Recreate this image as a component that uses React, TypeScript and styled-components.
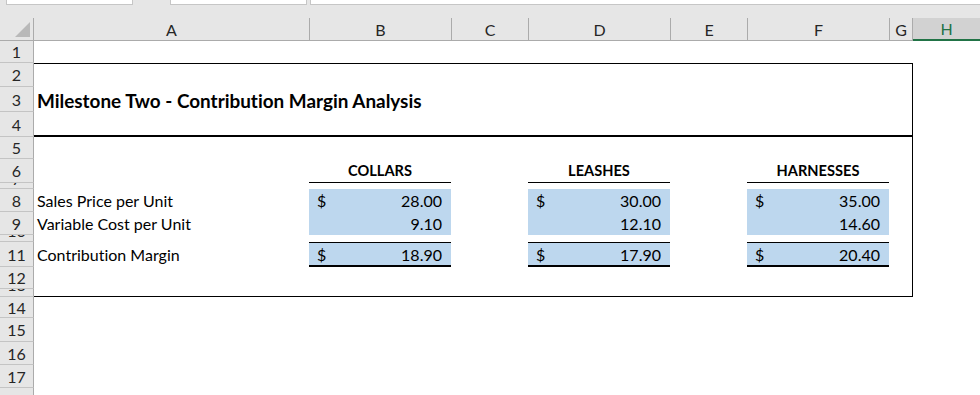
import React from 'react';
import styled, { createGlobalStyle, css } from 'styled-components';

const FONT = `Lato, "Liberation Sans", "DejaVu Sans", sans-serif`;

const GlobalStyle = createGlobalStyle`
  html, body { margin: 0; padding: 0; background: #ffffff; }
  body { font-family: ${FONT}; overflow: hidden; font-variant-ligatures: none; }
  #root { width: 980px; height: 395px; overflow: hidden; }
`;

const Window = styled.div`
  width: 980px;
  height: 395px;
  overflow: hidden;
  display: flex;
  flex-direction: column;
  background: #ffffff;
`;

const TopBar = styled.div`
  flex: none;
  height: 18px;
  background: #e6e6e6;
  display: flex;
  align-items: flex-start;
`;

const FieldBox = styled.div<{ $w?: number; $ml: number }>`
  height: 5px;
  box-sizing: border-box;
  background: #ffffff;
  border: 1px solid #c6c6c6;
  border-top: none;
  margin-left: ${(p) => p.$ml}px;
  ${(p) =>
    p.$w
      ? css`
          width: ${p.$w}px;
          flex: none;
        `
      : css`
          flex: 1;
          margin-right: -2px;
        `}
`;

const Sheet = styled.div`
  flex: 1;
  display: grid;
  grid-template-columns: 34px 275px 142px 77px 142px 77px 142px 24px 1fr;
  grid-template-rows: 23px 22px 24px 25px 25px 22px 24px 6px 23px 23px 7px 25px 22px 8px 21px 24px 23px 23px 23px;
  font-family: ${FONT};
  font-size: 16px;
  font-variant-ligatures: none;
  color: #000000;
  background: #ffffff;
`;

const Corner = styled.div`
  grid-column: 1;
  grid-row: 1;
  background: #e6e6e6;
  border-right: 1px solid #ababab;
  border-bottom: 1px solid #ababab;
  display: flex;
  align-items: flex-end;
  justify-content: flex-end;
  padding: 0 3px 3px 0;
  svg {
    display: block;
  }
`;

const ColHeader = styled.div<{ $col: number; $selected?: boolean; $left?: boolean; $right?: boolean }>`
  grid-column: ${(p) => p.$col};
  grid-row: 1;
  display: flex;
  align-items: center;
  justify-content: center;
  background: ${(p) => (p.$selected ? '#d2d2d2' : '#e6e6e6')};
  color: ${(p) => (p.$selected ? '#217346' : '#262626')};
  border-left: ${(p) => (p.$left ? '1px solid #ababab' : 'none')};
  border-right: ${(p) => (p.$right ? '1px solid #ababab' : 'none')};
  border-bottom: ${(p) => (p.$selected ? '2px solid #217346' : '1px solid #ababab')};
  overflow: hidden;
`;

const RowHeader = styled.div<{ $row: number }>`
  grid-column: 1;
  grid-row: ${(p) => p.$row + 1};
  background: #e6e6e6;
  color: #262626;
  border-right: 1px solid #ababab;
  border-bottom: 1px solid #c4c4c4;
  display: flex;
  align-items: center;
  justify-content: center;
  line-height: normal;
  overflow: hidden;
`;

const TinyRowHeader = styled(RowHeader)`
  align-items: flex-start;
  line-height: 0;
  span {
    display: block;
    margin-top: -4px;
  }
`;

const Frame = styled.div`
  grid-column: 2 / 9;
  grid-row: 3 / 15;
  border-top: 1px solid #000000;
  border-right: 1px solid #000000;
  border-bottom: 1px solid #000000;
  pointer-events: none;
  z-index: 2;
`;

const Divider = styled.div`
  grid-column: 2 / 9;
  grid-row: 5;
  border-bottom: 2px solid #000000;
  z-index: 2;
`;

const Title = styled.div`
  grid-column: 2 / 8;
  grid-row: 4;
  display: flex;
  align-items: center;
  padding: 1px 0 0 3px;
  font-weight: 700;
  font-size: 18.9px;
  white-space: nowrap;
`;

const Label = styled.div<{ $row: number }>`
  grid-column: 2;
  grid-row: ${(p) => p.$row + 1};
  display: flex;
  align-items: center;
  padding-left: 3px;
  white-space: nowrap;
`;

const ProductHeader = styled.div<{ $col: number }>`
  grid-column: ${(p) => p.$col};
  grid-row: 7;
  display: flex;
  align-items: center;
  justify-content: center;
  font-weight: 700;
  font-size: 14.6px;
  border-bottom: 1px solid #000000;
`;

const Amount = styled.div<{ $col: number; $row: number; $total?: boolean }>`
  grid-column: ${(p) => p.$col};
  grid-row: ${(p) => p.$row + 1};
  display: flex;
  align-items: center;
  justify-content: space-between;
  padding: 0 9px 0 8px;
  background: #bdd7ee;
  ${(p) =>
    p.$total &&
    css`
      border-top: 1px solid #000000;
      border-bottom: 2px solid #000000;
    `}
`;

const columns = [
  { name: 'A', col: 2 },
  { name: 'B', col: 3 },
  { name: 'C', col: 4 },
  { name: 'D', col: 5 },
  { name: 'E', col: 6 },
  { name: 'F', col: 7 },
  { name: 'G', col: 8 },
  { name: 'H', col: 9 },
];

const rows = Array.from({ length: 18 }, (_, i) => i + 1);
const tinyRows = new Set([7, 10, 13]);

const products = [
  { name: 'COLLARS', col: 3, price: '28.00', cost: '9.10', margin: '18.90' },
  { name: 'LEASHES', col: 5, price: '30.00', cost: '12.10', margin: '17.90' },
  { name: 'HARNESSES', col: 7, price: '35.00', cost: '14.60', margin: '20.40' },
];

export default function App() {
  return (
    <>
      <GlobalStyle />
      <Window>
        <TopBar>
          <FieldBox $w={127} $ml={6} />
          <FieldBox $w={137} $ml={37} />
          <FieldBox $ml={3} />
        </TopBar>
        <Sheet>
          <Corner>
            <svg width="15" height="15" viewBox="0 0 15 15">
              <polygon points="15,0 15,15 0,15" fill="#b9b9b9" />
            </svg>
          </Corner>
          {columns.map((c) => (
            <ColHeader
              key={c.name}
              $col={c.col}
              $left={c.col >= 3 && c.col <= 8}
              $right={c.col === 8}
              $selected={c.name === 'H'}
            >
              {c.name}
            </ColHeader>
          ))}
          {rows.map((r) =>
            tinyRows.has(r) ? (
              <TinyRowHeader key={r} $row={r}>
                <span>{r}</span>
              </TinyRowHeader>
            ) : (
              <RowHeader key={r} $row={r}>
                {r}
              </RowHeader>
            )
          )}

          <Frame />
          <Divider />
          <Title>Milestone Two - Contribution Margin Analysis</Title>

          <Label $row={8}>Sales Price per Unit</Label>
          <Label $row={9}>Variable Cost per Unit</Label>
          <Label $row={11}>Contribution Margin</Label>

          {products.map((p) => (
            <React.Fragment key={p.name}>
              <ProductHeader $col={p.col}>{p.name}</ProductHeader>
              <Amount $col={p.col} $row={8}>
                <span>$</span>
                <span>{p.price}</span>
              </Amount>
              <Amount $col={p.col} $row={9}>
                <span />
                <span>{p.cost}</span>
              </Amount>
              <Amount $col={p.col} $row={11} $total>
                <span>$</span>
                <span>{p.margin}</span>
              </Amount>
            </React.Fragment>
          ))}
        </Sheet>
      </Window>
    </>
  );
}
